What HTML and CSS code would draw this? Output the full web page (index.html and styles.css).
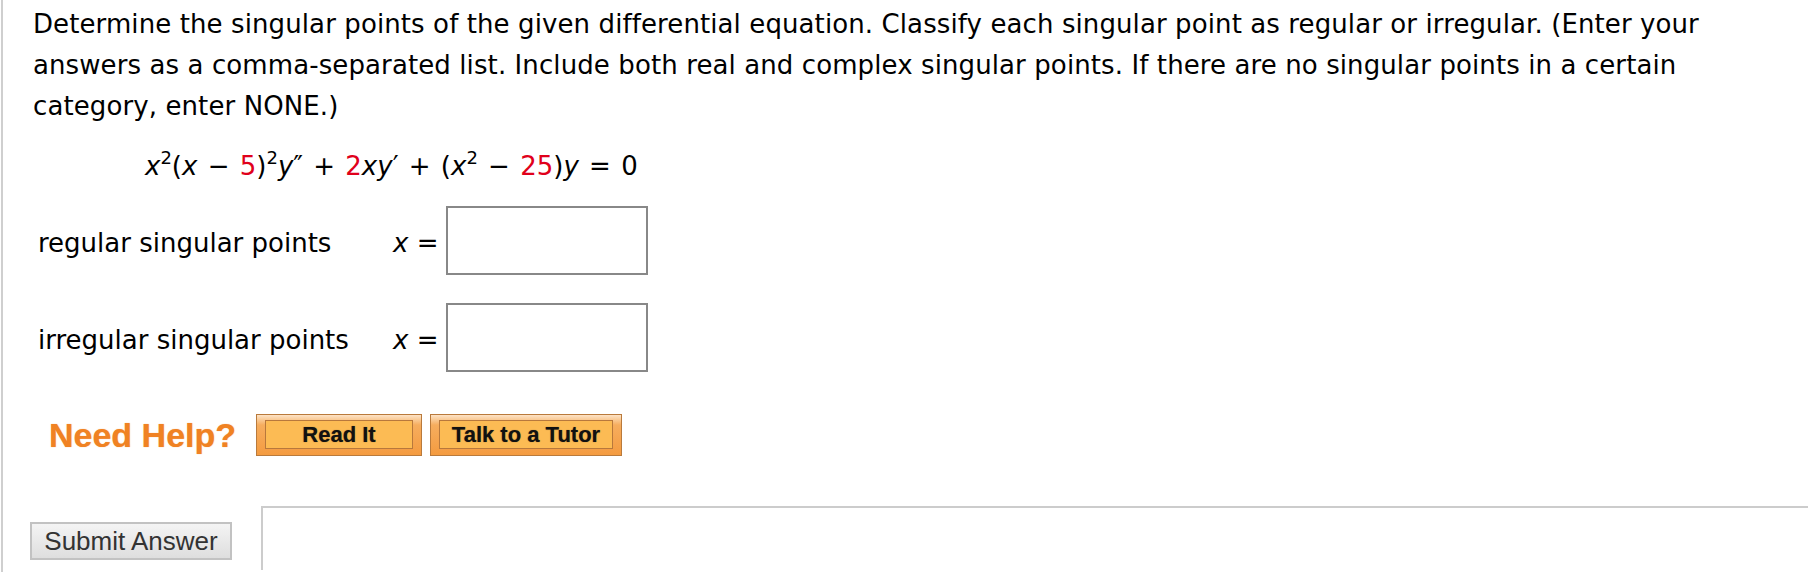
FILE: index.html
```html
<!DOCTYPE html>
<html>
<head>
<meta charset="utf-8">
<link rel="stylesheet" href="styles.css">
</head>
<body>
<div class="question">
  <p class="prompt">Determine the singular points of the given differential equation. Classify each singular point as regular or irregular. (Enter your answers as a comma-separated list. Include both real and complex singular points. If there are no singular points in a certain category, enter NONE.)</p>
  <div class="equation"><i>x</i><sup>2</sup>(<i>x</i> − <span class="red">5</span>)<sup>2</sup><i>y</i>″ + <span class="red">2</span><i>xy</i>′ + (<i>x</i><sup>2</sup> − <span class="red">25</span>)<i>y</i> = 0</div>
  <div class="answer-row">
    <span class="label">regular singular points</span>
    <span class="var"><i>x</i> =</span>
    <span class="box"></span>
  </div>
  <div class="answer-row">
    <span class="label">irregular singular points</span>
    <span class="var"><i>x</i> =</span>
    <span class="box"></span>
  </div>
  <div class="help-row">
    <span class="need-help">Need Help?</span>
    <span class="help-btn read"><span class="inner">Read It</span></span>
    <span class="help-btn tutor"><span class="inner">Talk to a Tutor</span></span>
  </div>
  <div class="submit-row">
    <span class="submit">Submit Answer</span>
    <div class="notes"></div>
  </div>
</div>
</body>
</html>
```
FILE: styles.css
```css
html, body {
  margin: 0;
  padding: 0;
  background: #fff;
  height: 572px;
  overflow: hidden;
}
.question {
  margin-left: 1px;
  border-left: 2px solid #cfcfcf;
  padding: 4px 20px 0 30px;
  height: 572px;
  box-sizing: border-box;
  overflow: hidden;
  font-family: "DejaVu Sans", Verdana, sans-serif;
  font-size: 26px;
  color: #000;
}
.prompt {
  margin: 0;
  line-height: 41px;
  letter-spacing: 0.1px;
}
.equation {
  margin: 19px 0 0 112px;
  line-height: 40px;
  font-size: 26px;
  word-spacing: 2px;
}
.equation sup {
  font-size: 18px;
  line-height: 0;
  vertical-align: 11px;
}
.red { color: #e0001b; }
.answer-row {
  display: flex;
  align-items: center;
  margin-top: 20px;
}
.answer-row + .answer-row { margin-top: 28px; }
.label {
  width: 355px;
  padding: 4px 0 0 5px;
}
.var {
  width: 53px;
  padding-top: 4px;
}
.box {
  width: 198px;
  height: 65px;
  border: 2px solid #888;
}
.help-row {
  display: flex;
  align-items: center;
  margin-top: 42px;
  font-family: "Liberation Sans", Arial, sans-serif;
}
.need-help {
  color: #f08223;
  font-size: 34px;
  font-weight: bold;
  padding-left: 16px;
  width: 207px;
  text-shadow: 0 0 1px rgba(240,130,35,0.7);
}
.help-btn {
  display: flex;
  box-sizing: border-box;
  height: 42px;
  padding: 5px 8px 6px 8px;
  margin-right: 8px;
  background: linear-gradient(#fde3c6 0%, #f6ad5e 25%, #f49b40 100%);
  border: 1px solid #b97a3c;
}
.help-btn .inner {
  display: block;
  flex: 1;
  border: 1px solid #b8783c;
  background: #fcbb54;
  font-size: 22px;
  font-weight: bold;
  line-height: 27px;
  text-align: center;
  color: #111;
  text-shadow: 0 0 1px rgba(0,0,0,0.5);
}
.read { width: 166px; }
.tutor { width: 192px; }
.submit-row {
  display: flex;
  align-items: flex-start;
  margin-top: 50px;
}
.submit {
  display: block;
  width: 202px;
  height: 38px;
  margin-top: 16px;
  margin-left: -3px;
  box-sizing: border-box;
  border: 2px solid #c2c2c2;
  background: linear-gradient(#f4f4f4, #dedede);
  font-family: "Liberation Sans", Arial, sans-serif;
  font-size: 26px;
  line-height: 34px;
  text-align: center;
  color: #333;
}
.notes {
  margin-left: 29px;
  flex: 1;
  height: 62px;
  border-top: 2px solid #ccc;
  border-left: 2px solid #ccc;
  margin-right: -20px;
}
```
